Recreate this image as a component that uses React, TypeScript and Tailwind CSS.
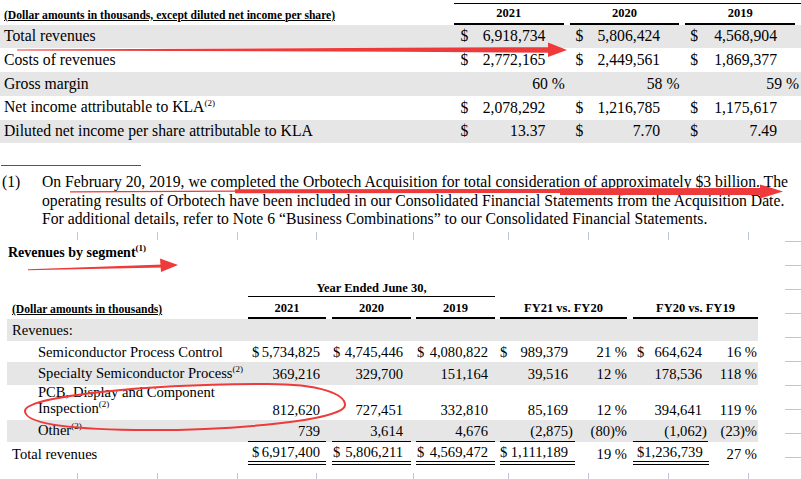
import React from 'react';

const RED = '#ee3a3a';

type TopRow = { label: string; sup?: string; vals?: string[]; pct?: string[] };

const topRows: TopRow[] = [
  { label: 'Total revenues', vals: ['6,918,734', '5,806,424', '4,568,904'] },
  { label: 'Costs of revenues', vals: ['2,772,165', '2,449,561', '1,869,377'] },
  { label: 'Gross margin', pct: ['60 %', '58 %', '59 %'] },
  { label: 'Net income attributable to KLA', sup: '(2)', vals: ['2,078,292', '1,216,785', '1,175,617'] },
  { label: 'Diluted net income per share attributable to KLA', vals: ['13.37', '7.70', '7.49'] },
];

type Seg = {
  label: string;
  label2?: string;
  sup?: string;
  indent?: boolean;
  gray?: boolean;
  h: string;
  line?: 'single' | 'double';
  dollar?: boolean;
  amts?: string[];
  pcts?: [string, string];
};

const segRows: Seg[] = [
  { label: 'Revenues:', gray: true, h: 'h-[22px]' },
  {
    label: 'Semiconductor Process Control', indent: true, h: 'h-[21px]', dollar: true,
    amts: ['5,734,825', '4,745,446', '4,080,822', '989,379', '664,624'], pcts: ['21 %', '16 %'],
  },
  {
    label: 'Specialty Semiconductor Process', sup: '(2)', indent: true, gray: true, h: 'h-[23px]',
    amts: ['369,216', '329,700', '151,164', '39,516', '178,536'], pcts: ['12 %', '118 %'],
  },
  {
    label: 'PCB, Display and Component', label2: 'Inspection', sup: '(2)', indent: true, h: 'h-[35px]',
    amts: ['812,620', '727,451', '332,810', '85,169', '394,641'], pcts: ['12 %', '119 %'],
  },
  {
    label: 'Other', sup: '(2)', indent: true, gray: true, h: 'h-[22px]', line: 'single',
    amts: ['739', '3,614', '4,676', '(2,875)', '(1,062)'], pcts: ['(80)%', '(23)%'],
  },
  {
    label: 'Total revenues', h: 'h-[23px]', line: 'double', dollar: true,
    amts: ['6,917,400', '5,806,211', '4,569,472', '1,111,189', '1,236,739'], pcts: ['19 %', '27 %'],
  },
];

// amount columns of the segment table: outer width + gap, inner padding
const amtCols = [
  { outer: 'w-[84px] pr-[6px]', inner: 'pl-[4px] pr-[6px]', slot: false },
  { outer: 'w-[84px] pr-[5px]', inner: 'pl-[1px] pr-[8px]', slot: false },
  { outer: 'w-[84px] pr-[5px]', inner: 'pl-[1px] pr-[7px]', slot: false },
  { outer: 'w-[78px] pr-[3px]', inner: 'pl-0 pr-[2px]', slot: true },
  { outer: 'w-[79px] pr-[4px]', inner: 'pl-[4px] pr-[1px]', slot: true },
];

function Sup({ children }: { children: React.ReactNode }) {
  return <span className="relative -top-[6px] text-[9px]">{children}</span>;
}

function AmtCell({ col, value, dollar, line, bottom }: {
  col: (typeof amtCols)[number];
  value?: string;
  dollar?: boolean;
  line?: 'single' | 'double';
  bottom?: boolean;
}) {
  const neg = value?.startsWith('(');
  const shown = neg ? value!.slice(0, -1) : value;
  const border = line === 'single'
    ? 'border-b border-black'
    : line === 'double'
      ? 'border-b-[4px] border-double border-black'
      : '';
  return (
    <div className={`${col.outer} flex`}>
      <div className={`flex-1 flex justify-between ${bottom ? 'items-end pb-[2px]' : 'items-center'} ${col.inner} ${border}`}>
        <span>{dollar ? '$' : ''}</span>
        <span className="flex">
          <span>{shown}</span>
          {col.slot && <span className="inline-block w-[5px]">{neg ? ')' : ''}</span>}
        </span>
      </div>
    </div>
  );
}

function PctCell({ w, pr, value, bottom }: { w: string; pr: string; value?: string; bottom?: boolean }) {
  return (
    <div className={`${w} ${pr} flex justify-end ${bottom ? 'items-end pb-[2px]' : 'items-center'}`}>
      {value}
    </div>
  );
}

function TopTable() {
  return (
    <div className="text-[15.7px]">
      <div className="flex h-[24.5px]">
        <div className="w-[463px] pl-[4px] pt-[9px] text-[11.6px] font-bold leading-[13px]">
          <span className="underline underline-offset-[1px]">
            (Dollar amounts in thousands, except diluted net income per share)
          </span>
        </div>
        <div className="w-[347px] mt-[3px] border-t-[1.5px] border-black flex">
          {['2021', '2020', '2019'].map((y) => (
            <div key={y} className="w-[116px] pr-[6px] flex">
              <div className="flex-1 border-b-2 border-black text-center text-[12.5px] font-bold leading-[18px]">{y}</div>
            </div>
          ))}
        </div>
      </div>
      {topRows.map((r, i) => (
        <div key={r.label} className={`flex items-center h-[23.75px] leading-[18px] ${i % 2 === 0 ? 'bg-[#e6e6e6]' : ''}`}>
          <div className="w-[463px] pl-[4px] whitespace-nowrap">
            {r.label}
            {r.sup && <Sup>{r.sup}</Sup>}
          </div>
          {r.vals &&
            r.vals.map((v, j) => (
              <div key={j} className={`w-[116px] pl-[4px] ${j === 2 ? 'pr-[24px]' : 'pr-[26px]'} flex justify-between`}>
                <span>$</span>
                <span>{v}</span>
              </div>
            ))}
          {r.pct &&
            r.pct.map((p, j) => (
              <div key={j} className={`w-[116px] ${j === 2 ? 'pr-[2px]' : 'pr-[7px]'} text-right whitespace-nowrap`}>{p}</div>
            ))}
        </div>
      ))}
    </div>
  );
}

function Footnote() {
  return (
    <div className="mt-[22px]">
      <div className="ml-[1px] w-[140px] h-px bg-[#555]" />
      <div className="flex mt-[7px] text-[15.7px] leading-[18.5px]">
        <div className="w-[42px] pl-[2px]">(1)</div>
        <div className="whitespace-nowrap">
          <div>On February 20, 2019, we completed the Orbotech Acquisition for total consideration of approximately $3 billion. The</div>
          <div>operating results of Orbotech have been included in our Consolidated Financial Statements from the Acquisition Date.</div>
          <div>For additional details, refer to Note 6 “Business Combinations” to our Consolidated Financial Statements.</div>
        </div>
      </div>
    </div>
  );
}

function SegmentTable() {
  return (
    <div className="ml-[7px] w-[751px] text-[14.6px]">
      <div className="flex">
        <div className="w-[241px]" />
        <div className="w-[247px] border-b-[1.5px] border-black text-center text-[12.5px] font-bold leading-[16px]">
          Year Ended June 30,
        </div>
      </div>
      <div className="flex mt-[2px] text-[12.5px] font-bold leading-[18px]">
        <div className="w-[241px] pl-[5px] pt-[4px] text-[11.6px] leading-[14px]">
          <span className="underline underline-offset-[1px]">(Dollar amounts in thousands)</span>
        </div>
        {[
          ['2021', 'w-[84px] pr-[6px]'],
          ['2020', 'w-[84px] pr-[5px]'],
          ['2019', 'w-[84px] pr-[5px]'],
          ['FY21 vs. FY20', 'w-[133px] pr-[6px]'],
          ['FY20 vs. FY19', 'w-[125px]'],
        ].map(([t, w]) => (
          <div key={t} className={`${w} flex`}>
            <div className="flex-1 border-b-2 border-black text-center whitespace-nowrap">{t}</div>
          </div>
        ))}
      </div>
      {segRows.map((r) => {
        const two = !!r.label2;
        return (
          <div key={r.label} className={`flex items-stretch ${r.h} leading-[16px] ${r.gray ? 'bg-[#e6e6e6]' : ''}`}>
            <div className={`w-[241px] flex flex-col ${two ? 'justify-end pb-[2px]' : 'justify-center'} ${r.indent ? 'pl-[31px]' : 'pl-[5px]'} whitespace-nowrap`}>
              {two ? (
                <>
                  <div>{r.label}</div>
                  <div>
                    {r.label2}
                    {r.sup && <Sup>{r.sup}</Sup>}
                  </div>
                </>
              ) : (
                <div>
                  {r.label}
                  {r.sup && <Sup>{r.sup}</Sup>}
                </div>
              )}
            </div>
            {r.amts && (
              <>
                {amtCols.slice(0, 4).map((c, j) => (
                  <AmtCell key={j} col={c} value={r.amts![j]} dollar={r.dollar} line={r.line} bottom={two} />
                ))}
                <PctCell w="w-[55px]" pr="pr-[6px]" value={r.pcts![0]} bottom={two} />
                <AmtCell col={amtCols[4]} value={r.amts[4]} dollar={r.dollar} line={r.line} bottom={two} />
                <PctCell w="w-[46px]" pr="pr-[1px]" value={r.pcts![1]} bottom={two} />
              </>
            )}
          </div>
        );
      })}
    </div>
  );
}

function Marks() {
  const ticks = [77, 157, 237, 316, 413, 508, 588, 668, 748];
  const side = [241, 265, 289, 313, 337, 361, 385, 409, 433, 457];
  return (
    <svg className="absolute left-0 top-0 pointer-events-none" width="801" height="479" viewBox="0 0 801 479">
      <g stroke="#bcc5da" strokeWidth="1">
        {ticks.map((x) => (
          <g key={x}>
            <line x1={x + 0.5} x2={x + 0.5} y1={232} y2={240} />
            <line x1={x + 0.5} x2={x + 0.5} y1={473} y2={479} />
          </g>
        ))}
        {side.map((y) => (
          <line key={y} x1={785} x2={801} y1={y + 0.5} y2={y + 0.5} />
        ))}
      </g>
      <g fill={RED}>
        {/* arrow under total revenues */}
        <polygon points="17,49.6 400,47.8 552,47.2 552,52.8 400,51.8 17,50.6" />
        <polygon points="548,42.5 567,50 548,57" />
        {/* arrow through footnote */}
        <polygon points="70,191.2 236,190.6 236,191.8 70,192.4" />
        <polygon points="235,189.3 562,189 562,193 235,193.2" />
        <polygon points="560,188.2 762,188 762,195 560,195" />
        <polygon points="760,184.5 783,191.5 760,198.5" />
        {/* arrow under segment heading */}
        <polygon points="28,269.2 163,264.6 163,267.6 28,270.2" />
        <polygon points="160,258.5 178,265 161,272" />
      </g>
      <path
        d="M25,411 C25,397 140,384 268,384 C320,384 345,394 345,405 C345,420 235,431 135,430 C65,429 25,423 25,411 Z"
        fill="none"
        stroke={RED}
        strokeWidth="2"
      />
    </svg>
  );
}

export default function App() {
  return (
    <div className="relative w-[801px] h-[479px] overflow-hidden bg-white text-black font-['Liberation_Serif','Times_New_Roman',serif]">
      <TopTable />
      <Footnote />
      <div className="mt-[15.5px] pl-[8px] text-[14px] font-bold leading-[18px]">
        Revenues by segment<Sup>(1)</Sup>
      </div>
      <div className="mt-[17px]">
        <SegmentTable />
      </div>
      <Marks />
    </div>
  );
}
